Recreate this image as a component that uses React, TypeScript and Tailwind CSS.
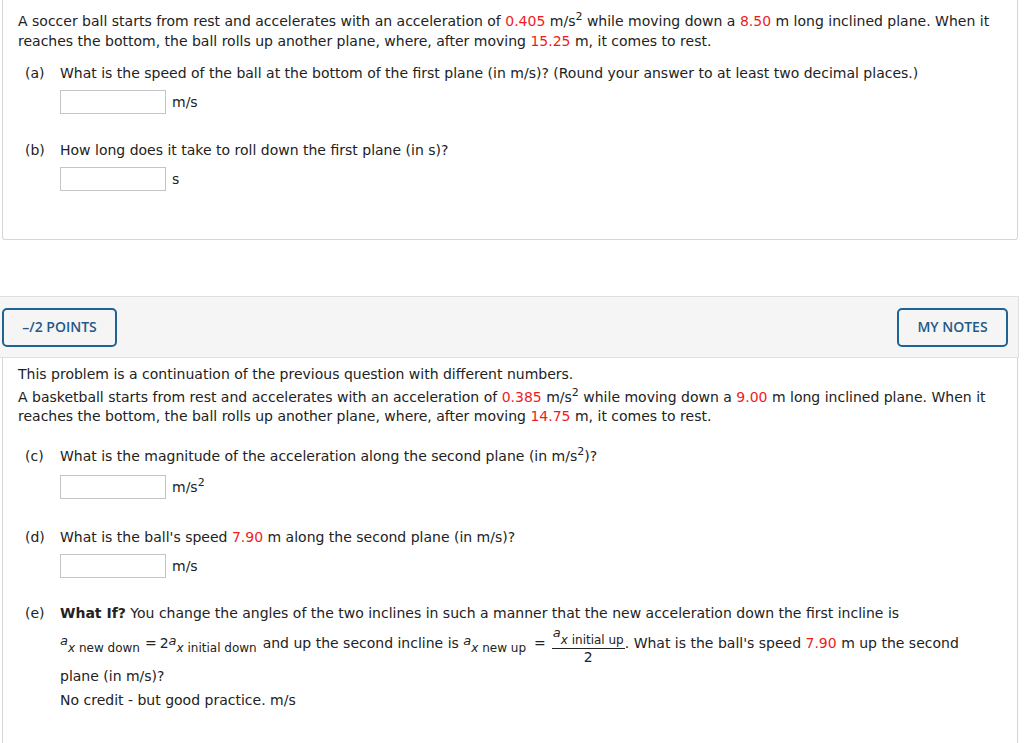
import React from "react";

const Red = ({ children }: { children: React.ReactNode }) => (
  <span className="text-[#ee1c1c]">{children}</span>
);

const Sup = ({ children }: { children: React.ReactNode }) => (
  <sup className="text-[11px] relative -top-[6px]">{children}</sup>
);

function AnswerBox({ unit }: { unit: React.ReactNode }) {
  return (
    <div className="flex items-center gap-[6px] pl-[57px]">
      <div className="w-[106px] h-[24px] border border-[#c4c4c4] bg-white" />
      <span>{unit}</span>
    </div>
  );
}

function Part({ label, children }: { label: string; children: React.ReactNode }) {
  return (
    <div className="flex pl-[7px]">
      <span className="w-[35px] shrink-0">{label}</span>
      <div>{children}</div>
    </div>
  );
}

// a with subscript x + words, the way the math renderer draws it
function AX({ sub }: { sub: string }) {
  return (
    <span className="whitespace-nowrap">
      <span className="italic relative -top-[3px] text-[13px]">a</span>
      <span className="relative top-[4px] text-[12px]">
        <span className="italic">x</span> {sub}
      </span>
    </span>
  );
}

export default function App() {
  return (
    <div
      className="min-h-screen bg-white text-[14px] leading-[20px] text-[#222]"
      style={{ fontFamily: '"DejaVu Sans", Verdana, sans-serif' }}
    >
      {/* first question */}
      <div className="ml-[2px] w-[1016px] h-[240px] border border-t-0 border-[#d6d6d6] rounded-b-[3px] pt-[11px] pl-[15px] pr-4">
        <p>
          A soccer ball starts from rest and accelerates with an acceleration of <Red>0.405</Red> m/s<Sup>2</Sup> while
          moving down a <Red>8.50</Red> m long inclined plane. When it reaches the bottom, the ball rolls up another
          plane, where, after moving <Red>15.25</Red> m, it comes to rest.
        </p>
        <div className="mt-[12px]">
          <Part label="(a)">
            What is the speed of the ball at the bottom of the first plane (in m/s)? (Round your answer to at least two
            decimal places.)
          </Part>
          <div className="mt-[7px] -ml-[15px]">
            <AnswerBox unit="m/s" />
          </div>
        </div>
        <div className="mt-[26px]">
          <Part label="(b)">How long does it take to roll down the first plane (in s)?</Part>
          <div className="mt-[7px] -ml-[15px]">
            <AnswerBox unit="s" />
          </div>
        </div>
      </div>

      {/* second question */}
      <div className="mt-[56px] w-[1019px]">
        <div
          className="h-[62px] bg-[#f5f5f5] border-t border-r border-b border-[#e0e0e0] flex items-center justify-between pl-[2px] pr-[10px]"
          style={{ fontFamily: '"Open Sans", sans-serif' }}
        >
          <button className="h-[39px] w-[115px] border-2 border-[#1f6394] rounded-[5px] text-[14px] font-semibold text-[#1f5a88] bg-[#f5f5f5]">
            –/2 POINTS
          </button>
          <button className="h-[39px] w-[111px] border-2 border-[#1f6394] rounded-[5px] text-[14px] font-semibold text-[#1f5a88] bg-[#f5f5f5]">
            MY NOTES
          </button>
        </div>
        <div className="ml-[2px] w-[1016px] h-[400px] border-l border-r border-[#d6d6d6] pt-[6px] pl-[15px] pr-4">
          <p>This problem is a continuation of the previous question with different numbers.</p>
          <p className="mt-[4px] leading-[19px]">
            A basketball starts from rest and accelerates with an acceleration of <Red>0.385</Red> m/s<Sup>2</Sup> while
            moving down a <Red>9.00</Red> m long inclined plane. When it reaches the bottom, the ball rolls up another
            plane, where, after moving <Red>14.75</Red> m, it comes to rest.
          </p>
          <div className="mt-[20px]">
            <Part label="(c)">
              What is the magnitude of the acceleration along the second plane (in m/s<Sup>2</Sup>)?
            </Part>
            <div className="mt-[9px] -ml-[15px]">
              <AnswerBox
                unit={
                  <>
                    m/s<Sup>2</Sup>
                  </>
                }
              />
            </div>
          </div>
          <div className="mt-[28px]">
            <Part label="(d)">
              What is the ball's speed <Red>7.90</Red> m along the second plane (in m/s)?
            </Part>
            <div className="mt-[7px] -ml-[15px]">
              <AnswerBox unit="m/s" />
            </div>
          </div>
          <div className="mt-[25px]">
            <Part label="(e)">
              <div>
                <b>What If?</b> You change the angles of the two inclines in such a manner that the new acceleration
                down the first incline is
              </div>
              <div className="flex items-center h-[40px]">
                <AX sub="new down" />
                <span className="ml-[5px] mr-[3px]">=</span>
                <span>2</span>
                <AX sub="initial down" />
                <span className="ml-[6px]">and up the second incline is&nbsp;</span>
                <AX sub="new up" />
                <span className="ml-[8px] mr-[6px]">=</span>
                <span className="inline-flex flex-col items-center relative top-[3px]">
                  <span className="border-b border-[#222] px-[1px] pb-[3px] leading-[18px]">
                    <AX sub="initial up" />
                  </span>
                  <span className="leading-[17px]">2</span>
                </span>
                <span>
                  . What is the ball's speed <Red>7.90</Red> m up the second
                </span>
              </div>
              <div className="mt-[3px]">plane (in m/s)?</div>
              <div className="mt-[4px]">No credit - but good practice. m/s</div>
            </Part>
          </div>
        </div>
      </div>
    </div>
  );
}
